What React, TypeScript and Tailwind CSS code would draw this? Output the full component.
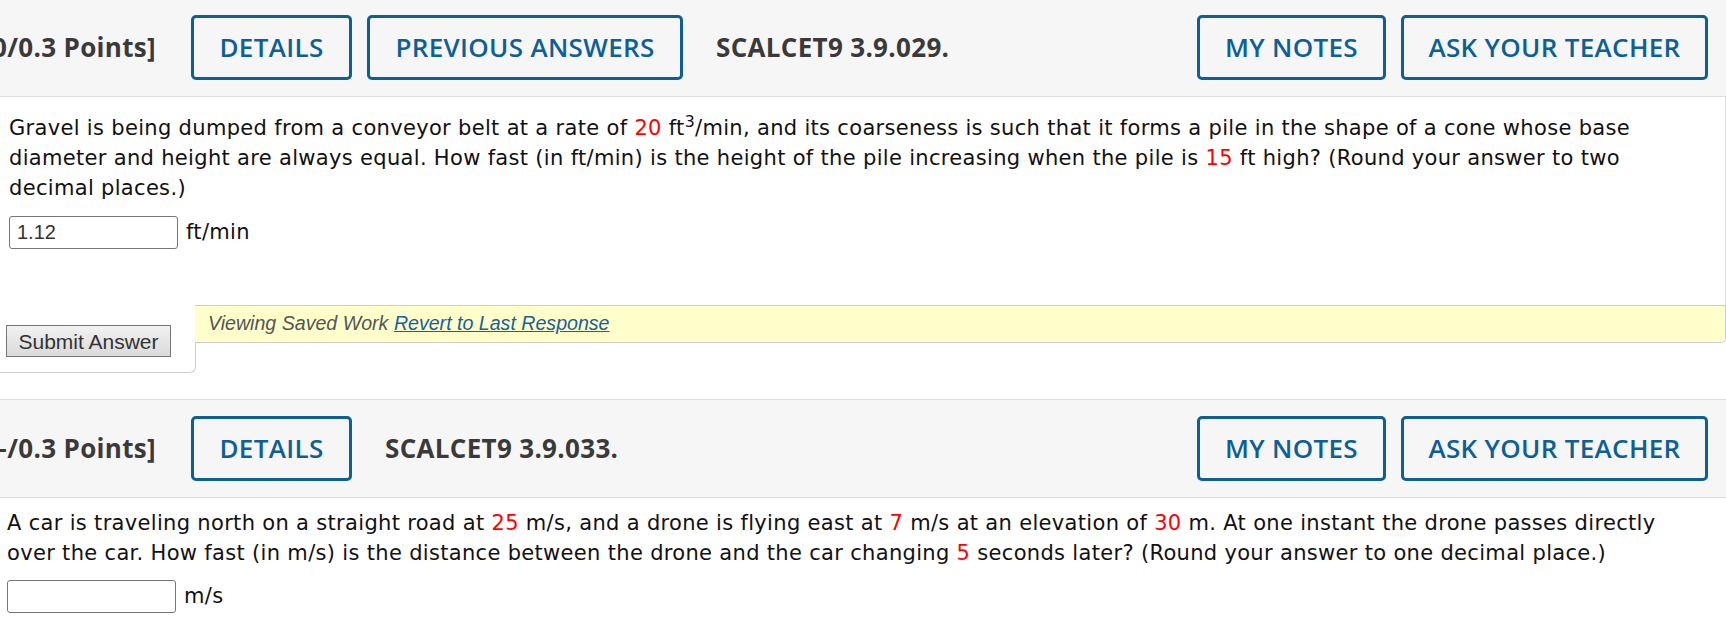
import React from 'react';

const HeaderButton: React.FC<{ label: string; width: string }> = ({ label, width }) => (
  <button
    type="button"
    className={`${width} h-[65px] shrink-0 rounded-[5px] border-[3px] border-[#0d5f96] text-center text-[26px] font-semibold text-[#0d5f96]`}
  >
    {label}
  </button>
);

const QuestionHeader: React.FC<{ points: string; code: string; previous?: boolean; first?: boolean }> = ({
  points,
  code,
  previous,
  first,
}) => (
  <div
    className={`flex h-[99px] items-center border-y border-[#dedede] bg-[#f6f6f6] font-['Open_Sans',sans-serif] ${
      first ? '-mt-[2px]' : ''
    }`}
  >
    <div className="flex w-[156px] shrink-0 justify-end overflow-hidden whitespace-nowrap text-[26px] font-bold text-[#3a3a3a]">
      {points}
    </div>
    <div className="ml-[35px] flex gap-[15px]">
      <HeaderButton label="DETAILS" width="w-[161px]" />
      {previous && <HeaderButton label="PREVIOUS ANSWERS" width="w-[316px]" />}
    </div>
    <div className="ml-[33px] whitespace-nowrap text-[26px] font-bold text-[#3a3a3a]">{code}</div>
    <div className="ml-auto mr-[18px] flex gap-[15px]">
      <HeaderButton label="MY NOTES" width="w-[189px]" />
      <HeaderButton label="ASK YOUR TEACHER" width="w-[307px]" />
    </div>
  </div>
);

const Red: React.FC<{ children: React.ReactNode }> = ({ children }) => (
  <span className="text-[#ff0000]">{children}</span>
);

const AnswerInput: React.FC<{ value?: string; unit: string }> = ({ value, unit }) => (
  <div className="flex items-center">
    <input
      type="text"
      defaultValue={value}
      className="h-[33px] w-[169px] rounded-[3px] border border-[#767676] bg-white px-[7px] font-['Liberation_Sans',Arial,sans-serif] text-[20px] tracking-normal text-[#333] outline-none"
    />
    <span className="ml-[8px]">{unit}</span>
  </div>
);

export default function App() {
  return (
    <div className="min-h-[642px] w-[1726px] overflow-hidden bg-white font-['DejaVu_Sans',Verdana,sans-serif] text-[21px] tracking-[0.32px] text-[#111]">
      <QuestionHeader first points="0/0.3 Points]" code="SCALCET9 3.9.029." previous />

      <div className="pb-[26px]">
        <div className="border-r border-[#e2e2e2] pb-[56px] pl-[9px] pr-[30px] pt-[16px]">
          <p className="leading-[30px]">
            Gravel is being dumped from a conveyor belt at a rate of <Red>20</Red> ft<sup>3</sup>/min, and its
            coarseness is such that it forms a pile in the shape of a cone whose base diameter and height are always
            equal. How fast (in ft/min) is the height of the pile increasing when the pile is <Red>15</Red> ft high?
            (Round your answer to two decimal places.)
          </p>
          <div className="mt-[13px]">
            <AnswerInput value="1.12" unit="ft/min" />
          </div>
        </div>

        <div className="flex">
          <div className="h-[68px] w-[196px] shrink-0 rounded-br-[6px] border-b border-r border-[#cccccc] pl-[6px] pt-[20px]">
            <button
              type="button"
              className="h-[32px] w-[165px] border border-[#767676] bg-gradient-to-b from-[#f2f2f2] to-[#dadada] font-['Liberation_Sans',Arial,sans-serif] text-[21px] tracking-normal text-[#333]"
            >
              Submit Answer
            </button>
          </div>
          <div className="-ml-px flex h-[38px] flex-1 items-center rounded-br-[5px] border-y border-r border-[#cccccc] bg-[#ffffcc] pl-[13px] font-['Liberation_Sans',Arial,sans-serif] text-[19.6px] italic tracking-normal text-[#555]">
            Viewing Saved Work&nbsp;
            <a href="#" className="text-[#17609a] underline">
              Revert to Last Response
            </a>
          </div>
        </div>
      </div>

      <QuestionHeader points="–/0.3 Points]" code="SCALCET9 3.9.033." />

      <div className="pl-[7px] pr-[30px] pt-[10px]">
        <p className="leading-[30px]">
          A car is traveling north on a straight road at <Red>25</Red> m/s, and a drone is flying east at <Red>7</Red>{' '}
          m/s at an elevation of <Red>30</Red> m. At one instant the drone passes directly over the car. How fast (in
          m/s) is the distance between the drone and the car changing <Red>5</Red> seconds later? (Round your answer to
          one decimal place.)
        </p>
        <div className="mt-[12px]">
          <AnswerInput unit="m/s" />
        </div>
      </div>
    </div>
  );
}
